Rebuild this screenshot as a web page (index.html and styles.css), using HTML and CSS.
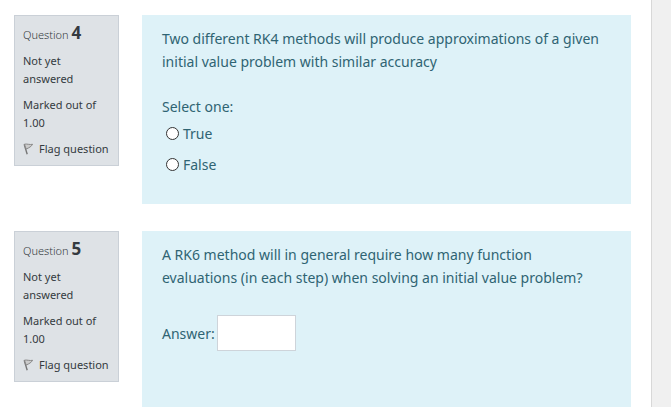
FILE: index.html
```
<!DOCTYPE html>
<html lang="en">
<head>
    <meta charset="UTF-8">
    <meta name="viewport" content="width=device-width, initial-scale=1.0">
    <title>Quiz</title>
    <link rel="stylesheet" href="styles.css">
</head>
<body>
    <main class="quiz">
        <section class="question">
            <div class="info">
                <h3 class="number">Question <span class="qno">4</span></h3>
                <div class="state">Not yet answered</div>
                <div class="grade">Marked out of 1.00</div>
                <a class="flag" href="#">
                    <svg class="flag-icon" width="12" height="12" viewBox="0 0 12 12" aria-hidden="true">
                        <path d="M1.2 1.2 L4.2 11.2" fill="none" stroke="#777" stroke-width="1.4"/>
                        <path d="M1.4 1.2 C4 .6 6.5 2 9.6 1.3 C8.4 3.4 6.2 4.8 3.2 6 Z" fill="#ccc" stroke="#888" stroke-width="1"/>
                    </svg>
                    <span>Flag question</span>
                </a>
            </div>
            <div class="formulation">
                <p class="qtext">Two different RK4 methods will produce approximations of a given initial value problem with similar accuracy</p>
                <fieldset class="choices">
                    <legend class="prompt">Select one:</legend>
                    <div class="choice">
                        <input type="radio" name="q4" id="q4-true" value="1">
                        <label for="q4-true">True</label>
                    </div>
                    <div class="choice">
                        <input type="radio" name="q4" id="q4-false" value="0">
                        <label for="q4-false">False</label>
                    </div>
                </fieldset>
            </div>
        </section>

        <section class="question">
            <div class="info">
                <h3 class="number">Question <span class="qno">5</span></h3>
                <div class="state">Not yet answered</div>
                <div class="grade">Marked out of 1.00</div>
                <a class="flag" href="#">
                    <svg class="flag-icon" width="12" height="12" viewBox="0 0 12 12" aria-hidden="true">
                        <path d="M1.2 1.2 L4.2 11.2" fill="none" stroke="#777" stroke-width="1.4"/>
                        <path d="M1.4 1.2 C4 .6 6.5 2 9.6 1.3 C8.4 3.4 6.2 4.8 3.2 6 Z" fill="#ccc" stroke="#888" stroke-width="1"/>
                    </svg>
                    <span>Flag question</span>
                </a>
            </div>
            <div class="formulation">
                <p class="qtext">A RK6 method will in general require how many function evaluations (in each step) when solving an initial value problem?</p>
                <div class="answer">
                    <label for="q5-answer">Answer:</label>
                    <input type="text" id="q5-answer" name="q5">
                </div>
            </div>
        </section>
    </main>
    <aside class="drawer"></aside>
</body>
</html>
```

FILE: styles.css
```
* {
    box-sizing: border-box;
}

body {
    margin: 0;
    display: flex;
    min-height: 100vh;
    background: #fff;
    color: #343a40;
    font-family: "Noto Sans", "Open Sans", sans-serif;
    font-size: 14px;
    line-height: 23px;
}

.quiz {
    flex: 1;
    display: flex;
    flex-direction: column;
    gap: 27px;
    padding: 15px 20px 0 14px;
}

.drawer {
    width: 20px;
    background: #f0f0f0;
    border-left: 1px solid #d8d8d8;
}

.question {
    display: flex;
    align-items: flex-start;
    gap: 23px;
}

.question:last-child {
    flex: 1;
}

/* Side box with number, state and mark */
.info {
    display: flex;
    flex-direction: column;
    gap: 8px;
    width: 105px;
    padding: 8px 8px 7px;
    background: #dee2e6;
    border: 1px solid #cad0d7;
    font-size: 11px;
    line-height: 18px;
}

.number {
    margin: 0;
    font-size: 11px;
    font-weight: 300;
    line-height: 18px;
}

.qno {
    font-size: 17px;
    font-weight: 700;
    line-height: 17px;
}

.flag {
    display: flex;
    align-items: center;
    gap: 4px;
    color: inherit;
    text-decoration: none;
    white-space: nowrap;
}

.flag-icon {
    flex: none;
}

/* Question body */
.formulation {
    flex: 1;
    align-self: stretch;
    padding: 12px 24px 28px 20px;
    background: #def2f8;
    color: #2f6473;
}

.qtext {
    margin: 0 0 22px;
}

.choices {
    margin: 0;
    padding: 0;
    border: 0;
}

.prompt {
    padding: 0;
    margin-bottom: 4px;
}

.choice {
    display: flex;
    align-items: center;
    gap: 4px;
    padding-left: 4px;
}

.choice + .choice {
    margin-top: 8px;
}

.choice input {
    appearance: none;
    width: 13px;
    height: 13px;
    margin: 0;
    background: #fff;
    border: 1px solid #333;
    border-radius: 50%;
}

.choice input:checked {
    background: radial-gradient(#333 3px, #fff 4px);
}

.answer {
    display: flex;
    align-items: center;
    gap: 2px;
    padding-top: 4px;
}

.answer input {
    width: 79px;
    height: 36px;
    padding: 6px 12px;
    background: #fff;
    border: 1px solid #ced4da;
    color: #495057;
    font: inherit;
}
```
